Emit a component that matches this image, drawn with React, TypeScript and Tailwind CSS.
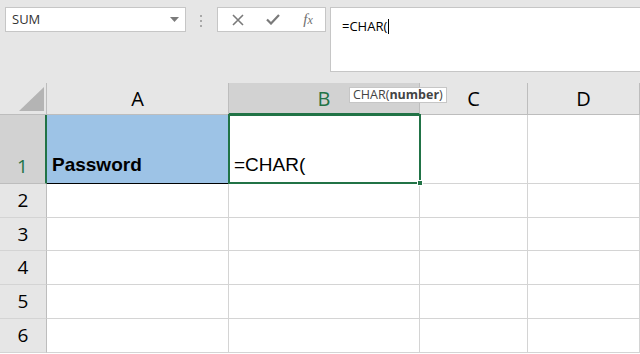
import type { FC } from 'react'

const font = { fontFamily: '"Open Sans", "Liberation Sans", sans-serif' }

const rows = [2, 3, 4, 5, 6]

const Toolbar: FC = () => (
    <div className="relative h-[83px] bg-[#e6e6e6]">
        {/* Name box */}
        <div className="absolute left-[5px] top-[7px] flex h-[25px] w-[181px] items-center justify-between border border-[#c6c6c6] bg-white pl-[6px] pr-[6px]">
            <span className="text-[13px] text-[#333]">SUM</span>
            <svg width="9" height="5" viewBox="0 0 9 5">
                <path d="M0 0h9L4.5 5z" fill="#7b7b7b" />
            </svg>
        </div>

        {/* Dots */}
        <div className="absolute left-[200px] top-[15px] flex flex-col gap-[3px]">
            <span className="h-[2px] w-[2px] bg-[#a8a8a8]" />
            <span className="h-[2px] w-[2px] bg-[#a8a8a8]" />
            <span className="h-[2px] w-[2px] bg-[#a8a8a8]" />
        </div>

        {/* Cancel / enter / fx */}
        <div className="absolute left-[217px] top-[7px] flex h-[25px] w-[109px] items-center border border-[#c6c6c6] bg-white">
            <div className="flex w-[37px] justify-center pl-[2px]">
                <svg width="12" height="12" viewBox="0 0 12 12">
                    <path d="M1 1l10 10M11 1L1 11" stroke="#7a7a7a" strokeWidth="1.6" />
                </svg>
            </div>
            <div className="flex w-[36px] justify-center">
                <svg width="14" height="11" viewBox="0 0 14 11">
                    <path d="M1 5.5l4 4L13 1" stroke="#7a7a7a" strokeWidth="2.2" fill="none" />
                </svg>
            </div>
            <div className="flex w-[34px] justify-center">
                <span className="text-[15px] italic leading-none text-[#6f6f6f]" style={{ fontFamily: '"Liberation Serif", serif' }}>
                    f<span className="text-[12px]">x</span>
                </span>
            </div>
        </div>

        {/* Formula bar */}
        <div className="absolute left-[330px] top-[7px] h-[65px] w-[320px] border border-[#c6c6c6] bg-white pl-[11px] pt-[5px]">
            <span className="text-[13px] text-black">=CHAR(</span>
            <span className="ml-px inline-block h-[15px] w-px translate-y-[3px] bg-black" />
        </div>
    </div>
)

const App: FC = () => {
    return (
        <div className="relative h-[354px] w-[640px] overflow-hidden bg-white" style={font}>
            <Toolbar />

            <div className="grid grid-cols-[47px_182px_191px_108px_112px] grid-rows-[32px_69px_34px_33px_34px_34px_34px]">
                {/* Header row */}
                <div className="relative border-r border-b border-[#bdbdbd] bg-[#e6e6e6]">
                    <svg className="absolute left-[19px] top-[4px]" width="25" height="24" viewBox="0 0 25 24">
                        <path d="M25 0v24H0z" fill="#b4b4b4" />
                    </svg>
                </div>
                <div className="flex items-center justify-center border-r border-b border-[#bdbdbd] bg-[#e6e6e6] text-[20px] text-black">
                    A
                </div>
                <div className="flex items-center justify-center border-r border-b-2 border-r-[#bdbdbd] border-b-[#217346] bg-[#d2d2d2] pt-[1px] text-[20px] text-[#217346]">
                    B
                </div>
                <div className="flex items-center justify-center border-r border-b border-[#bdbdbd] bg-[#e6e6e6] text-[20px] text-black">
                    C
                </div>
                <div className="flex items-center justify-center border-r border-b border-[#bdbdbd] bg-[#e6e6e6] text-[20px] text-black">
                    D
                </div>

                {/* Row 1 */}
                <div className="flex items-end justify-center border-r-2 border-b border-r-[#217346] border-b-[#bdbdbd] bg-[#d2d2d2] pb-[3px] text-[19px] text-[#217346]">
                    1
                </div>
                <div
                    className="flex items-end border-r border-b border-r-[#d4d4d4] border-b-black bg-[#9dc3e6] pb-[4px] pl-[5px] text-[19px] font-bold text-black"
                    style={{ fontFamily: '"Liberation Sans", sans-serif' }}>
                    Password
                </div>
                <div className="relative flex items-end border-b border-[#d4d4d4] pb-[4px] pl-[5px] text-[19px] text-black" style={{ fontFamily: '"Liberation Sans", sans-serif' }}>
                    =CHAR(
                    <div className="absolute -left-px -top-px -right-px -bottom-px border-2 border-[#217346]" />
                    <div className="absolute -bottom-[3px] -right-[3px] h-[6px] w-[6px] border border-white bg-[#217346]" />
                </div>
                <div className="border-r border-b border-[#d4d4d4]" />
                <div className="border-r border-b border-[#d4d4d4]" />

                {rows.map(n => (
                    <div key={n} className="contents">
                        <div className="flex items-center justify-center border-r border-b border-r-[#bdbdbd] border-b-[#d4d4d4] bg-[#e6e6e6] text-[19px] text-black">
                            {n}
                        </div>
                        <div className="border-r border-b border-[#d4d4d4]" />
                        <div className="border-r border-b border-[#d4d4d4]" />
                        <div className="border-r border-b border-[#d4d4d4]" />
                        <div className="border-r border-b border-[#d4d4d4]" />
                    </div>
                ))}
            </div>

            {/* Function tooltip */}
            <div className="absolute left-[349px] top-[87px] flex h-[16px] items-center border border-[#c6c6c6] bg-white px-[3px] text-[12.5px] leading-none text-[#444]">
                CHAR(<span className="font-bold">number</span>)
            </div>
        </div>
    )
}

export default App
